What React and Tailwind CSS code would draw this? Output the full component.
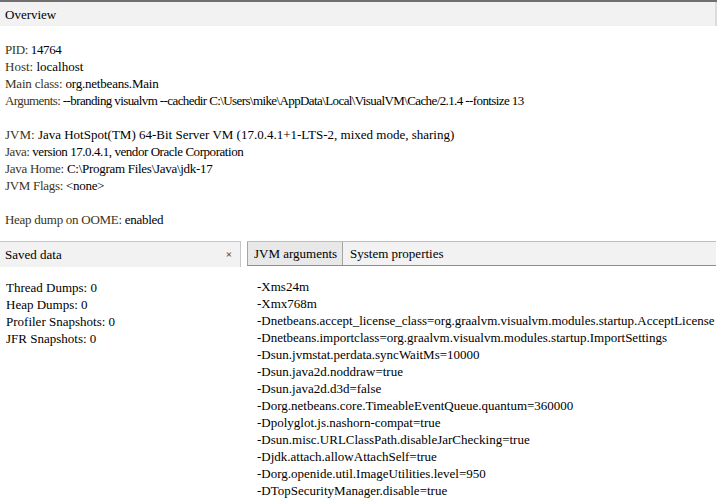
const overview = [
  ['PID:', '14764', 'tracking-[-0.4px]'],
  ['Host:', 'localhost', ''],
  ['Main class:', 'org.netbeans.Main', 'tracking-[-0.2px]'],
  ['Arguments:', '--branding visualvm --cachedir C:\\Users\\mike\\AppData\\Local\\VisualVM\\Cache/2.1.4 --fontsize 13', 'tracking-[-0.6px]'],
  null,
  ['JVM:', 'Java HotSpot(TM) 64-Bit Server VM (17.0.4.1+1-LTS-2, mixed mode, sharing)', ''],
  ['Java:', 'version 17.0.4.1, vendor Oracle Corporation', 'tracking-[-0.45px]'],
  ['Java Home:', 'C:\\Program Files\\Java\\jdk-17', 'tracking-[-0.28px]'],
  ['JVM Flags:', '<none>', 'tracking-[-0.3px]'],
  null,
  ['Heap dump on OOME:', 'enabled', 'tracking-[-0.27px]'],
];

const saved = ['Thread Dumps: 0', 'Heap Dumps: 0', 'Profiler Snapshots: 0', 'JFR Snapshots: 0'];

const jvmArgs = [
  '-Xms24m',
  '-Xmx768m',
  '-Dnetbeans.accept_license_class=org.graalvm.visualvm.modules.startup.AcceptLicense',
  '-Dnetbeans.importclass=org.graalvm.visualvm.modules.startup.ImportSettings',
  '-Dsun.jvmstat.perdata.syncWaitMs=10000',
  '-Dsun.java2d.noddraw=true',
  '-Dsun.java2d.d3d=false',
  '-Dorg.netbeans.core.TimeableEventQueue.quantum=360000',
  '-Dpolyglot.js.nashorn-compat=true',
  '-Dsun.misc.URLClassPath.disableJarChecking=true',
  '-Djdk.attach.allowAttachSelf=true',
  '-Dorg.openide.util.ImageUtilities.level=950',
  '-DTopSecurityManager.disable=true',
];

export default function App() {
  return (
    <div className="w-[719px] h-[500px] overflow-hidden bg-white font-['Liberation_Serif','Times_New_Roman',serif] text-[13px] leading-[17px] text-black">
      {/* overview */}
      <div className="w-[717px] border-t-2 border-[#6f6f6f]">
        <div className="flex h-[24px] items-center border-r-2 border-[#dcdcdc] bg-[#f2f2f2] px-[5px] whitespace-nowrap">
          Overview
        </div>
      </div>
      <div className="h-[215px] px-[5px] pt-[15px] whitespace-nowrap">
        {overview.map((row, i) =>
          row ? (
            <div key={i} className={`h-[17px] ${row[2]}`}>
              <span className="text-[#3c3520]">{row[0]}</span> {row[1]}
            </div>
          ) : (
            <div key={i} className="h-[17px]" />
          )
        )}
      </div>

      {/* bottom panels */}
      <div className="flex">
        <div className="w-[241px] shrink-0">
          <div className="flex h-[26px] items-center justify-between border-t border-r border-[#c6c6c6] bg-[#f2f2f2] pl-[5px] pr-[8px] whitespace-nowrap">
            <span>Saved data</span>
            <span className="text-[11px] font-bold text-[#444]">×</span>
          </div>
          <div className="px-[6px] pt-[12px] whitespace-nowrap">
            {saved.map((s) => (
              <div key={s} className="h-[17px]">{s}</div>
            ))}
          </div>
        </div>

        <div className="ml-[6px] w-[469px] shrink-0">
          <div className="flex h-[25px] border-t border-[#bdbdbd] border-b border-b-[#8e8e8e] bg-[#f2f2f2] whitespace-nowrap">
            <div className="flex w-[96px] items-center border-x border-[#a4a4a4] bg-[#e8e8e8] pl-[6px]">
              JVM arguments
            </div>
            <div className="flex flex-1 items-center pl-[7px]">System properties</div>
          </div>
          <div className="pl-[10px] pt-[12px] whitespace-nowrap">
            {jvmArgs.map((a) => (
              <div key={a} className="h-[17px]">{a}</div>
            ))}
          </div>
        </div>
      </div>
    </div>
  );
}
